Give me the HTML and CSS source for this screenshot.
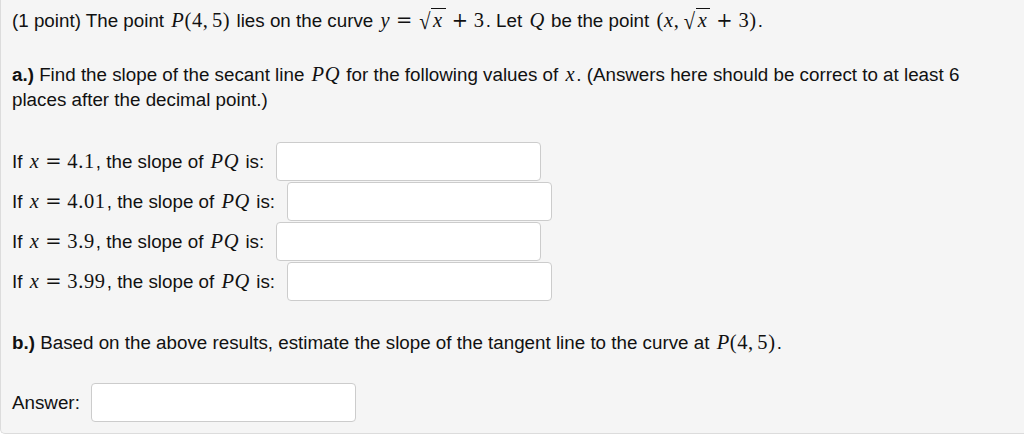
FILE: index.html
```html
<!DOCTYPE html>
<html>
<head>
<meta charset="utf-8">
<link rel="stylesheet" href="styles.css">
</head>
<body>
<div class="problem">
  <p class="intro">(1 point) The point <span class="m"><i>P</i>(4,<span class="th"></span>5)</span> lies on the curve <span class="m"><i>y</i><span class="rel">=</span><span class="sqrt"><span class="rad">√</span><span class="under"><i>x</i></span></span><span class="bin">+</span>3</span>. Let <span class="m"><i>Q</i></span> be the point <span class="m">(<i>x</i>,<span class="th"></span><span class="sqrt"><span class="rad">√</span><span class="under"><i>x</i></span></span><span class="bin">+</span>3)</span>.</p>

  <p class="part"><b>a.)</b> Find the slope of the secant line <span class="m"><i>PQ</i></span> for the following values of <span class="m"><i>x</i></span>. (Answers here should be correct to at least 6 places after the decimal point.)</p>

  <div class="rows">
    <div class="row"><span class="label">If <span class="m"><i>x</i><span class="rel">=</span>4.1</span>, the slope of <span class="m"><i>PQ</i></span> is:</span><span class="field"></span></div>
    <div class="row"><span class="label">If <span class="m"><i>x</i><span class="rel">=</span>4.01</span>, the slope of <span class="m"><i>PQ</i></span> is:</span><span class="field"></span></div>
    <div class="row"><span class="label">If <span class="m"><i>x</i><span class="rel">=</span>3.9</span>, the slope of <span class="m"><i>PQ</i></span> is:</span><span class="field"></span></div>
    <div class="row"><span class="label">If <span class="m"><i>x</i><span class="rel">=</span>3.99</span>, the slope of <span class="m"><i>PQ</i></span> is:</span><span class="field"></span></div>
  </div>

  <p class="part partb"><b>b.)</b> Based on the above results, estimate the slope of the tangent line to the curve at <span class="m"><i>P</i>(4,<span class="th"></span>5)</span>.</p>

  <div class="row answer"><span class="label">Answer:</span><span class="field"></span></div>
</div>
</body>
</html>
```

FILE: styles.css
```css
html, body {
  margin: 0;
  padding: 0;
  background: #ffffff;
  overflow: hidden;
}

.problem {
  background: #f5f5f5;
  border: 1px solid #dcdcdc;
  border-top: none;
  border-right: none;
  border-radius: 0 0 0 5px;
  padding: 9px 40px 11px 11px;
  font-family: "Liberation Sans", Arial, Helvetica, sans-serif;
  font-size: 18.8px;
  color: #111;
}

.intro {
  margin: 0;
  line-height: 24px;
}

.part {
  margin: 29px 0 0 0;
  line-height: 25px;
}

.m {
  font-family: "Liberation Serif", "Times New Roman", serif;
  font-size: 20.5px;
  line-height: 20px;
  letter-spacing: 0.03em;
  white-space: nowrap;
  margin: 0 1px 0 2px;
}

.m i {
  font-style: italic;
}

.rel,
.bin {
  font-family: "DejaVu Serif", "Liberation Serif", serif;
  font-size: 0.95em;
  letter-spacing: 0;
}

.rel {
  margin: 0 0.3em;
}

.bin {
  margin: 0 0.3em;
}

.th {
  display: inline-block;
  width: 0.17em;
}

.sqrt {
  display: inline-block;
  white-space: nowrap;
}

.rad {
  font-style: normal;
  display: inline-block;
  transform: scaleY(1.12) translateY(1px);
  margin-left: 1px;
}

.under {
  border-top: 1px solid #111;
  padding: 0 3px 0 2px;
}

.rows {
  margin-top: 29px;
}

.row {
  display: flex;
  align-items: center;
  height: 40px;
  line-height: 25px;
}

.label {
  white-space: nowrap;
}

.field {
  display: block;
  width: 265px;
  height: 39px;
  box-sizing: border-box;
  margin-left: 12px;
  background: #ffffff;
  border: 1px solid #cccccc;
  border-radius: 4px;
}

.partb {
  margin-top: 29px;
}

.answer {
  margin-top: 27px;
}

.answer .field {
  margin-left: 11px;
}
```
